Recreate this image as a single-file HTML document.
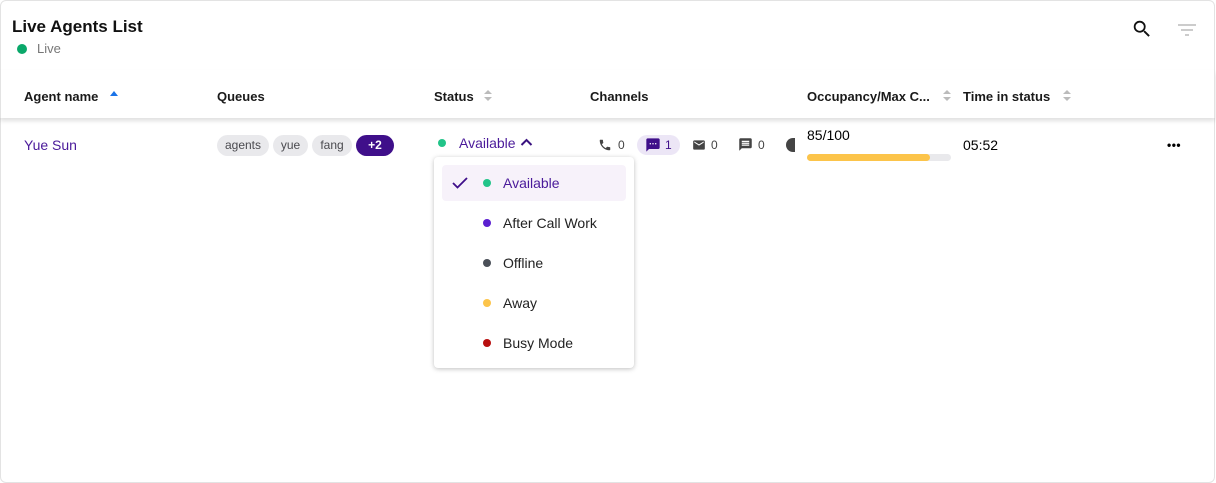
<!DOCTYPE html>
<html><head><meta charset="utf-8"><style>
*{box-sizing:border-box;margin:0;padding:0}
body{width:1216px;height:483px;background:#fff;font-family:"Liberation Sans",Arial,sans-serif;position:relative;overflow:hidden;color:#000}
.card{position:absolute;left:0;top:0;width:1215px;height:483px;border:1px solid #e3e3e3;border-radius:6px}
.abs{position:absolute}
.h{font-size:13px;font-weight:bold;color:#1a1a1a}
.sort{position:absolute;width:0;height:0;border-left:4px solid transparent;border-right:4px solid transparent}
.chip{position:absolute;top:135px;height:21px;border-radius:11px;background:#e9e9ec;color:#4a4a4f;font-size:12px;line-height:21px;text-align:center}
.dot{position:absolute;width:8px;height:8px;border-radius:50%}
.item{position:absolute;left:503px;font-size:14px;color:#222}
</style></head><body>
<div class="card"></div>
<div class="abs" style="left:12px;top:17px;font-size:17px;font-weight:bold;color:#111">Live Agents List</div>
<div class="dot" style="left:17px;top:44px;width:10px;height:10px;background:#0aa86a"></div>
<div class="abs" style="left:37px;top:41px;font-size:13px;color:#777">Live</div>
<svg class="abs" style="left:1131px;top:18px" width="22" height="22" viewBox="0 0 24 24"><path d="M15.5 14h-.79l-.28-.27A6.470 6.470 0 0 0 16 9.5 6.5 6.5 0 1 0 9.5 16c1.61 0 3.09-.59 4.230-1.57l.27.28v.79l5 4.99L20.49 19l-4.990-5zm-6 0C7.01 14 5 11.99 5 9.5S7.01 5 9.5 5 14 7.01 14 9.5 11.99 14 9.5 14z" fill="#111"/></svg>
<svg class="abs" style="left:1175px;top:18px" width="24" height="24" viewBox="0 0 24 24"><path d="M10 18h4v-2h-4v2zM3 6v2h18V6H3zm3 7h12v-2H6v2z" fill="#ccc"/></svg>
<div class="abs" style="left:0;top:70px;width:1215px;height:48px;box-shadow:0 3px 4px rgba(0,0,0,0.12)"></div>
<div class="abs h" style="left:24px;top:89px">Agent name</div>
<div class="sort" style="left:110px;top:91px;border-bottom:5px solid #1a73e8"></div>
<div class="abs h" style="left:217px;top:89px">Queues</div>
<div class="abs h" style="left:434px;top:89px">Status</div>
<div class="sort" style="left:484px;top:90px;border-bottom:4px solid #bbb"></div><div class="sort" style="left:484px;top:97px;border-top:4px solid #bbb"></div>
<div class="abs h" style="left:590px;top:89px">Channels</div>
<div class="abs h" style="left:807px;top:89px">Occupancy/Max C...</div>
<div class="sort" style="left:943px;top:90px;border-bottom:4px solid #bbb"></div><div class="sort" style="left:943px;top:97px;border-top:4px solid #bbb"></div>
<div class="abs h" style="left:963px;top:89px">Time in status</div>
<div class="sort" style="left:1063px;top:90px;border-bottom:4px solid #bbb"></div><div class="sort" style="left:1063px;top:97px;border-top:4px solid #bbb"></div>
<div class="abs" style="left:24px;top:137px;font-size:14px;color:#4a1a9a">Yue Sun</div>
<div class="chip" style="left:217px;width:52px">agents</div>
<div class="chip" style="left:273px;width:35px">yue</div>
<div class="chip" style="left:312px;width:40px">fang</div>
<div class="chip" style="left:356px;width:38px;background:#3f0f8a;color:#fff;font-weight:bold">+2</div>
<div class="dot" style="left:438px;top:139px;background:#22c489"></div>
<div class="abs" style="left:459px;top:135px;font-size:14px;color:#4a1a9a">Available</div>
<svg class="abs" style="left:519px;top:135px" width="15" height="15" viewBox="0 0 24 24"><path d="M4 16l8-8 8 8" stroke="#3a1280" stroke-width="3.2" fill="none"/></svg>
<svg class="abs" style="left:598px;top:138px" width="14" height="14" viewBox="0 0 24 24"><path d="M6.6 10.8c1.4 2.8 3.8 5.1 6.6 6.6l2.2-2.2c.3-.3.7-.4 1-.2 1.1.4 2.3.6 3.6.6.6 0 1 .4 1 1V20c0 .6-.4 1-1 1C10.6 21 3 13.4 3 4c0-.6.4-1 1-1h3.5c.6 0 1 .4 1 1 0 1.3.2 2.5.6 3.6.1.3 0 .7-.2 1L6.6 10.8z" fill="#444"/></svg>
<div class="abs" style="left:618px;top:138px;font-size:12px;color:#444">0</div>
<div class="abs" style="left:637px;top:135px;width:43px;height:20px;border-radius:10px;background:#ece6f6"></div>
<svg class="abs" style="left:645px;top:137px" width="16" height="16" viewBox="0 0 24 24"><path d="M20 2H4c-1.1 0-2 .9-2 2v18l4-4h14c1.1 0 2-.9 2-2V4c0-1.1-.9-2-2-2zM9 11H7V9h2v2zm4 0h-2V9h2v2zm4 0h-2V9h2v2z" fill="#3f0f8a"/></svg>
<div class="abs" style="left:665px;top:138px;font-size:12px;color:#3f0f8a">1</div>
<svg class="abs" style="left:692px;top:138px" width="14" height="14" viewBox="0 0 24 24"><path d="M20 4H4c-1.1 0-2 .9-2 2v12c0 1.1.9 2 2 2h16c1.1 0 2-.9 2-2V6c0-1.1-.9-2-2-2zm0 4l-8 5-8-5V6l8 5 8-5v2z" fill="#444"/></svg>
<div class="abs" style="left:711px;top:138px;font-size:12px;color:#444">0</div>
<svg class="abs" style="left:738px;top:137px" width="15" height="15" viewBox="0 0 24 24"><path d="M20 2H4c-1.1 0-2 .9-2 2v18l4-4h14c1.1 0 2-.9 2-2V4c0-1.1-.9-2-2-2zM18 14H6v-2h12v2zm0-3H6V9h12v2zm0-3H6V6h12v2z" fill="#444"/></svg>
<div class="abs" style="left:758px;top:138px;font-size:12px;color:#444">0</div>
<div class="abs" style="left:786px;top:138px;width:9px;height:14px;border-radius:7px 0 0 7px;background:#444"></div>
<div class="abs" style="left:807px;top:127px;font-size:14px">85/100</div>
<div class="abs" style="left:807px;top:154px;width:144px;height:7px;border-radius:4px;background:#e9e9ec"></div>
<div class="abs" style="left:807px;top:154px;width:123px;height:7px;border-radius:4px;background:#fcc44a"></div>
<div class="abs" style="left:963px;top:137px;font-size:14px">05:52</div>
<div class="abs" style="left:1167px;top:138px;font-size:12px;font-weight:bold;letter-spacing:0.5px">&#8226;&#8226;&#8226;</div>
<div class="abs" style="left:434px;top:157px;width:200px;height:211px;background:#fff;border-radius:4px;box-shadow:0 1px 5px rgba(0,0,0,0.25)"></div>
<div class="abs" style="left:442px;top:165px;width:184px;height:36px;border-radius:4px;background:#f7f2fa"></div>
<svg class="abs" style="left:452px;top:176px" width="16" height="14" viewBox="0 0 16 14"><path d="M1 7l4.5 4.5L15 2" stroke="#3f0f8a" stroke-width="1.8" fill="none"/></svg>
<div class="dot" style="left:483px;top:179px;background:#22c489"></div>
<div class="item" style="top:175px;color:#4a1a9a">Available</div>
<div class="dot" style="left:483px;top:219px;background:#5b1fd0"></div>
<div class="item" style="top:215px">After Call Work</div>
<div class="dot" style="left:483px;top:259px;background:#4a4f58"></div>
<div class="item" style="top:255px">Offline</div>
<div class="dot" style="left:483px;top:299px;background:#fcc44a"></div>
<div class="item" style="top:295px">Away</div>
<div class="dot" style="left:483px;top:339px;background:#b80f0f"></div>
<div class="item" style="top:335px">Busy Mode</div>
</body></html>
